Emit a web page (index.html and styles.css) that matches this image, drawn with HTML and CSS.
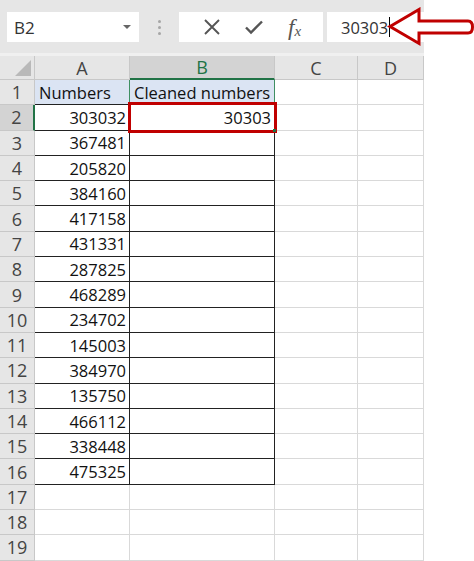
FILE: index.html
```html
<!DOCTYPE html>
<html lang="en">
<head>
    <meta charset="UTF-8">
    <title>Cleaned numbers</title>
    <link rel="stylesheet" href="styles.css">
</head>
<body>
    <div class="sheet">
        <div class="toolbar">
            <div class="namebox">
                <span>B2</span>
                <span class="caret"></span>
            </div>
            <div class="dots"><i></i><i></i><i></i></div>
            <div class="fbuttons">
                <svg width="18" height="18" viewBox="0 0 18 18"><path d="M2 2 L16 16 M16 2 L2 16" stroke="#555" stroke-width="1.9" fill="none"/></svg>
                <svg width="20" height="18" viewBox="0 0 20 18"><path d="M2 9.5 L7 14.5 L18 3.5" stroke="#555" stroke-width="2.4" fill="none"/></svg>
                <span class="fx">f<sub>x</sub></span>
            </div>
            <div class="finput">30303<span class="cursor"></span></div>
        </div>

        <div class="grid">
            <!-- column headers -->
            <div class="hd corner"><span class="tri"></span></div>
            <div class="hd">A</div>
            <div class="hd sel">B</div>
            <div class="hd">C</div>
            <div class="hd">D</div>

            <div class="rh">1</div>
            <div class="c title">Numbers</div>
            <div class="c title bcol">Cleaned numbers</div>
            <div class="c"></div>
            <div class="c"></div>

            <div class="rh sel">2</div>
            <div class="c num a first">303032</div>
            <div class="c num b first active">30303</div>
            <div class="c"></div>
            <div class="c"></div>

            <div class="rh">3</div>
            <div class="c num a">367481</div>
            <div class="c b"></div>
            <div class="c"></div>
            <div class="c"></div>

            <div class="rh">4</div>
            <div class="c num a">205820</div>
            <div class="c b"></div>
            <div class="c"></div>
            <div class="c"></div>

            <div class="rh">5</div>
            <div class="c num a">384160</div>
            <div class="c b"></div>
            <div class="c"></div>
            <div class="c"></div>

            <div class="rh">6</div>
            <div class="c num a">417158</div>
            <div class="c b"></div>
            <div class="c"></div>
            <div class="c"></div>

            <div class="rh">7</div>
            <div class="c num a">431331</div>
            <div class="c b"></div>
            <div class="c"></div>
            <div class="c"></div>

            <div class="rh">8</div>
            <div class="c num a">287825</div>
            <div class="c b"></div>
            <div class="c"></div>
            <div class="c"></div>

            <div class="rh">9</div>
            <div class="c num a">468289</div>
            <div class="c b"></div>
            <div class="c"></div>
            <div class="c"></div>

            <div class="rh">10</div>
            <div class="c num a">234702</div>
            <div class="c b"></div>
            <div class="c"></div>
            <div class="c"></div>

            <div class="rh">11</div>
            <div class="c num a">145003</div>
            <div class="c b"></div>
            <div class="c"></div>
            <div class="c"></div>

            <div class="rh">12</div>
            <div class="c num a">384970</div>
            <div class="c b"></div>
            <div class="c"></div>
            <div class="c"></div>

            <div class="rh">13</div>
            <div class="c num a">135750</div>
            <div class="c b"></div>
            <div class="c"></div>
            <div class="c"></div>

            <div class="rh">14</div>
            <div class="c num a">466112</div>
            <div class="c b"></div>
            <div class="c"></div>
            <div class="c"></div>

            <div class="rh">15</div>
            <div class="c num a">338448</div>
            <div class="c b"></div>
            <div class="c"></div>
            <div class="c"></div>

            <div class="rh">16</div>
            <div class="c num a">475325</div>
            <div class="c b"></div>
            <div class="c"></div>
            <div class="c"></div>

            <div class="rh">17</div>
            <div class="c"></div>
            <div class="c"></div>
            <div class="c"></div>
            <div class="c"></div>

            <div class="rh">18</div>
            <div class="c"></div>
            <div class="c"></div>
            <div class="c"></div>
            <div class="c"></div>

            <div class="rh">19</div>
            <div class="c"></div>
            <div class="c"></div>
            <div class="c"></div>
            <div class="c"></div>
        </div>
    </div>

    <!-- callout arrow pointing at the formula bar -->
    <svg class="arrow" width="90" height="40" viewBox="384 7 90 40">
        <path d="M390 26.5 L419 9.5 L419 21 L468 21 Q472.5 21 472.5 27 Q472.5 33 468 33 L419 33 L419 43.5 Z"
              fill="#fff" stroke="#c00000" stroke-width="3" stroke-linejoin="miter"/>
    </svg>
</body>
</html>
```

FILE: styles.css
```css
body {
    margin: 0;
    background: #fff;
    font-family: "Open Sans", "Noto Sans", sans-serif;
    color: #222;
}
.sheet {
    width: 424px;
}
.toolbar {
    height: 56px;
    background: #e6e6e6;
    border-bottom: 3px solid #f0f0f0;
    display: flex;
    align-items: flex-start;
    padding-top: 12px;
    box-sizing: border-box;
}
.namebox {
    margin-left: 7px;
    width: 132px;
    height: 30px;
    background: #fff;
    box-sizing: border-box;
    display: flex;
    align-items: center;
    justify-content: space-between;
    padding: 0 8px 0 7px;
    font-size: 17px;
    color: #333;
}
.caret {
    width: 0;
    height: 0;
    border-left: 4px solid transparent;
    border-right: 4px solid transparent;
    border-top: 4px solid #666;
}
.dots {
    width: 40px;
    height: 30px;
    display: flex;
    flex-direction: column;
    align-items: center;
    justify-content: center;
    gap: 3px;
}
.dots i {
    width: 3px;
    height: 3px;
    background: #a6a6a6;
    border-radius: 50%;
}
.fbuttons {
    width: 144px;
    height: 30px;
    background: #fff;
    display: flex;
    align-items: center;
    justify-content: space-around;
    padding: 0 10px 0 12px;
    box-sizing: border-box;
}
.fx {
    font-family: "Liberation Serif", serif;
    font-style: italic;
    font-size: 23px;
    color: #555;
    line-height: 1;
}
.fx sub {
    font-size: 15px;
    vertical-align: -1px;
}
.finput {
    margin-left: 4px;
    flex: 1;
    height: 30px;
    background: #fff;
    display: flex;
    align-items: center;
    padding-left: 14px;
    font-size: 16.5px;
    color: #333;
}
.cursor {
    width: 1px;
    height: 20px;
    background: #000;
    margin-left: 1px;
}
.grid {
    display: grid;
    grid-template-columns: 35px 95px 145px 83px 66px;
    grid-template-rows: 24px repeat(19, 25.3px);
}
.hd, .rh {
    background: #e6e6e6;
    color: #444;
    font-size: 18px;
    display: flex;
    align-items: center;
    justify-content: center;
    border-right: 1px solid #c8c8c8;
    border-bottom: 1px solid #c8c8c8;
    box-sizing: border-box;
}
.hd.sel {
    background: #d3d3d3;
    color: #217346;
    border-bottom: 2px solid #217346;
}
.rh.sel {
    background: #d3d3d3;
    border-right: 2px solid #217346;
}
.corner {
    position: relative;
}
.tri {
    position: absolute;
    right: 3px;
    bottom: 3px;
    width: 0;
    height: 0;
    border-left: 16px solid transparent;
    border-bottom: 16px solid #b9b9b9;
}
.c {
    border-right: 1px solid #d9d9d9;
    border-bottom: 1px solid #d9d9d9;
    box-sizing: border-box;
    font-size: 16.5px;
    color: #111;
    display: flex;
    align-items: center;
    padding: 0 3px 0 4px;
    white-space: nowrap;
}
.title {
    background: #dbe4f3;
}
.title.bcol {
    border-left: 1px solid #3f8f62;
    border-right: 1px solid #3f8f62;
    margin-left: -1px;
}
.num {
    justify-content: flex-end;
}
.a, .b {
    border-right-color: #222;
    border-bottom-color: #222;
}
.first {
    border-top: 1px solid #222;
    margin-top: -1px;
}
.active {
    position: relative;
    outline: 3px solid #c00000;
    outline-offset: -1px;
    z-index: 1;
}
.active::after {
    content: "";
    position: absolute;
    right: -2px;
    bottom: -2px;
    width: 3px;
    height: 3px;
    background: #217346;
}
.arrow {
    position: absolute;
    left: 384px;
    top: 7px;
}
```
